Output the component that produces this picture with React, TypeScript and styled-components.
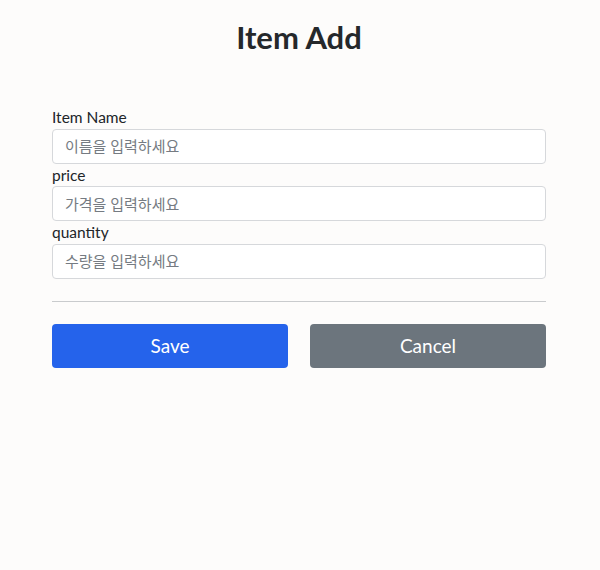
import React from "react";
import styled, { createGlobalStyle } from "styled-components";

const GlobalStyle = createGlobalStyle`
  html, body {
    margin: 0;
    padding: 0;
    background: #fdfcfb;
  }
  body {
    font-family: Lato, "Noto Sans CJK KR", sans-serif;
    color: #212529;
  }
  * { box-sizing: border-box; }
`;

const Page = styled.div`
  width: 494px;
  margin: 0 54px 0 52px;
  padding-top: 19px;
`;

const Title = styled.h2`
  margin: 0 0 50px;
  text-align: center;
  font-size: 31px;
  font-weight: 700;
  line-height: 1.2;
  color: #25282b;
`;

const Form = styled.form`
  display: flex;
  flex-direction: column;
`;

const Field = styled.div`
  display: flex;
  flex-direction: column;
`;

const Label = styled.label`
  font-size: 15.5px;
  line-height: 22.5px;
`;

const Input = styled.input`
  height: 35px;
  padding: 0 12px;
  font-family: Lato, "Noto Sans CJK KR", sans-serif;
  font-size: 15px;
  color: #212529;
  background: #fff;
  border: 1px solid #d6d8db;
  border-radius: 4px;
  outline: none;
  &::placeholder {
    color: #757b82;
  }
`;

const Divider = styled.hr`
  margin: 22px 0 22px;
  border: 0;
  border-top: 1px solid #c9cbcd;
`;

const Actions = styled.div`
  display: grid;
  grid-template-columns: 1fr 1fr;
  gap: 22px;
`;

const Button = styled.button<{ $variant: "primary" | "secondary" }>`
  height: 44px;
  border: 0;
  border-radius: 4px;
  font-family: Lato, "Noto Sans CJK KR", sans-serif;
  font-size: 19px;
  color: #fff;
  cursor: pointer;
  background: ${(p) => (p.$variant === "primary" ? "#2563eb" : "#6c757d")};
`;

const fields = [
  { id: "itemName", label: "Item Name", placeholder: "이름을 입력하세요" },
  { id: "price", label: "price", placeholder: "가격을 입력하세요" },
  { id: "quantity", label: "quantity", placeholder: "수량을 입력하세요" },
];

export default function App() {
  return (
    <>
      <GlobalStyle />
      <Page>
        <Title>Item Add</Title>
        <Form onSubmit={(e) => e.preventDefault()}>
          {fields.map((f) => (
            <Field key={f.id}>
              <Label htmlFor={f.id}>{f.label}</Label>
              <Input id={f.id} type="text" placeholder={f.placeholder} />
            </Field>
          ))}
          <Divider />
          <Actions>
            <Button type="submit" $variant="primary">Save</Button>
            <Button type="button" $variant="secondary">Cancel</Button>
          </Actions>
        </Form>
      </Page>
    </>
  );
}
